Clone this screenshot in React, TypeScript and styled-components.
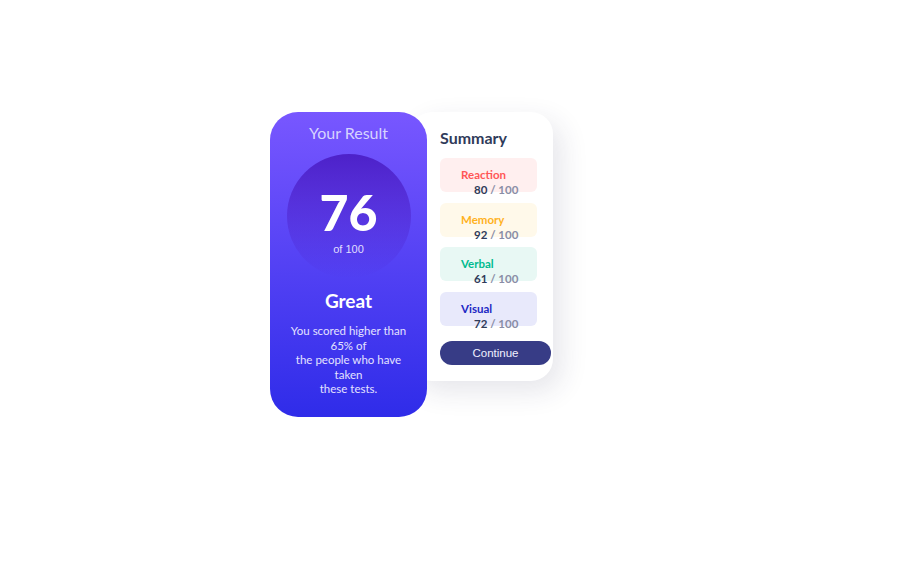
import React from "react";
import styled, { createGlobalStyle } from "styled-components";

const Global = createGlobalStyle`
  html, body { margin: 0; padding: 0; background: #ffffff; }
  body { font-family: "Lato", "Noto Sans", sans-serif; }
  * { box-sizing: border-box; }
`;

const Page = styled.main`
  display: flex;
  align-items: flex-start;
  padding: 112px 0 0 270px;
  width: 900px;
  height: 563px;
`;

const ResultCard = styled.section`
  position: relative;
  z-index: 2;
  width: 157px;
  height: 305px;
  flex: none;
  border-radius: 28px;
  background: linear-gradient(180deg, #7857ff 0%, #2f2ce9 100%);
  display: flex;
  flex-direction: column;
  align-items: center;
  padding-top: 11px;
  color: #fff;
`;

const ResultTitle = styled.h2`
  margin: 0;
  font-size: 16px;
  font-weight: 400;
  color: #d6d3ff;
  line-height: 20px;
`;

const Circle = styled.div`
  margin-top: 11px;
  width: 124px;
  height: 124px;
  border-radius: 50%;
  background: linear-gradient(180deg, #4d21c9 0%, rgba(37, 33, 201, 0) 100%);
  display: flex;
  flex-direction: column;
  align-items: center;
  justify-content: center;
`;

const Score = styled.div`
  font-size: 50px;
  font-weight: 900;
  line-height: 52px;
  margin-top: 8px;
`;

const OutOf = styled.div`
  font-family: "Liberation Sans", Arial, sans-serif;
  font-size: 11px;
  color: #e0deff;
  margin-top: 5px;
`;

const Verdict = styled.h3`
  margin: 11px 0 0;
  font-size: 19px;
  font-weight: 700;
  line-height: 24px;
`;

const Blurb = styled.p`
  margin: 11px 0 0;
  font-size: 11.5px;
  line-height: 14.5px;
  text-align: center;
  color: #e4e2ff;
`;

const SummaryCard = styled.section`
  position: relative;
  z-index: 1;
  margin-left: -17px;
  width: 143px;
  height: 269px;
  flex: none;
  background: #fff;
  border-radius: 22px;
  box-shadow: 8px 10px 28px rgba(40, 40, 80, 0.12);
  padding: 16px 0 0 30px;
`;

const SummaryTitle = styled.h2`
  margin: 0;
  font-size: 16px;
  font-weight: 700;
  color: #303b5a;
  line-height: 20px;
`;

const List = styled.div`
  margin-top: 10px;
  display: flex;
  flex-direction: column;
  gap: 10.5px;
`;

const Item = styled.div<{ $bg: string }>`
  width: 97px;
  height: 34px;
  border-radius: 6px;
  background: ${(p) => p.$bg};
  padding: 9px 0 0 21px;
`;

const Label = styled.div<{ $color: string }>`
  font-size: 11.5px;
  font-weight: 700;
  line-height: 15px;
  color: ${(p) => p.$color};
`;

const Points = styled.div`
  margin-left: 13px;
  font-size: 11.5px;
  font-weight: 700;
  line-height: 15px;
  color: #303b5a;
  white-space: nowrap;
  span { color: #8a8da6; font-weight: 700; }
`;

const ContinueButton = styled.button`
  margin-top: 15px;
  width: 111px;
  height: 24px;
  border: none;
  border-radius: 12px;
  background: #373c86;
  color: #f0f0ff;
  font-family: "Liberation Sans", Arial, sans-serif;
  font-size: 11.5px;
  padding: 0;
`;

const items = [
  { label: "Reaction", score: 80, color: "#ff5757", bg: "#ffefef" },
  { label: "Memory", score: 92, color: "#ffb21e", bg: "#fff9ea" },
  { label: "Verbal", score: 61, color: "#00bb8f", bg: "#e8f8f4" },
  { label: "Visual", score: 72, color: "#1c27c4", bg: "#e8e9fb" },
];

export default function App() {
  return (
    <>
      <Global />
      <Page>
        <ResultCard>
          <ResultTitle>Your Result</ResultTitle>
          <Circle>
            <Score>76</Score>
            <OutOf>of 100</OutOf>
          </Circle>
          <Verdict>Great</Verdict>
          <Blurb>
            You scored higher than
            <br />
            65% of
            <br />
            the people who have
            <br />
            taken
            <br />
            these tests.
          </Blurb>
        </ResultCard>
        <SummaryCard>
          <SummaryTitle>Summary</SummaryTitle>
          <List>
            {items.map((it) => (
              <Item key={it.label} $bg={it.bg}>
                <Label $color={it.color}>{it.label}</Label>
                <Points>
                  {it.score} <span>/ 100</span>
                </Points>
              </Item>
            ))}
          </List>
          <ContinueButton>Continue</ContinueButton>
        </SummaryCard>
      </Page>
    </>
  );
}
